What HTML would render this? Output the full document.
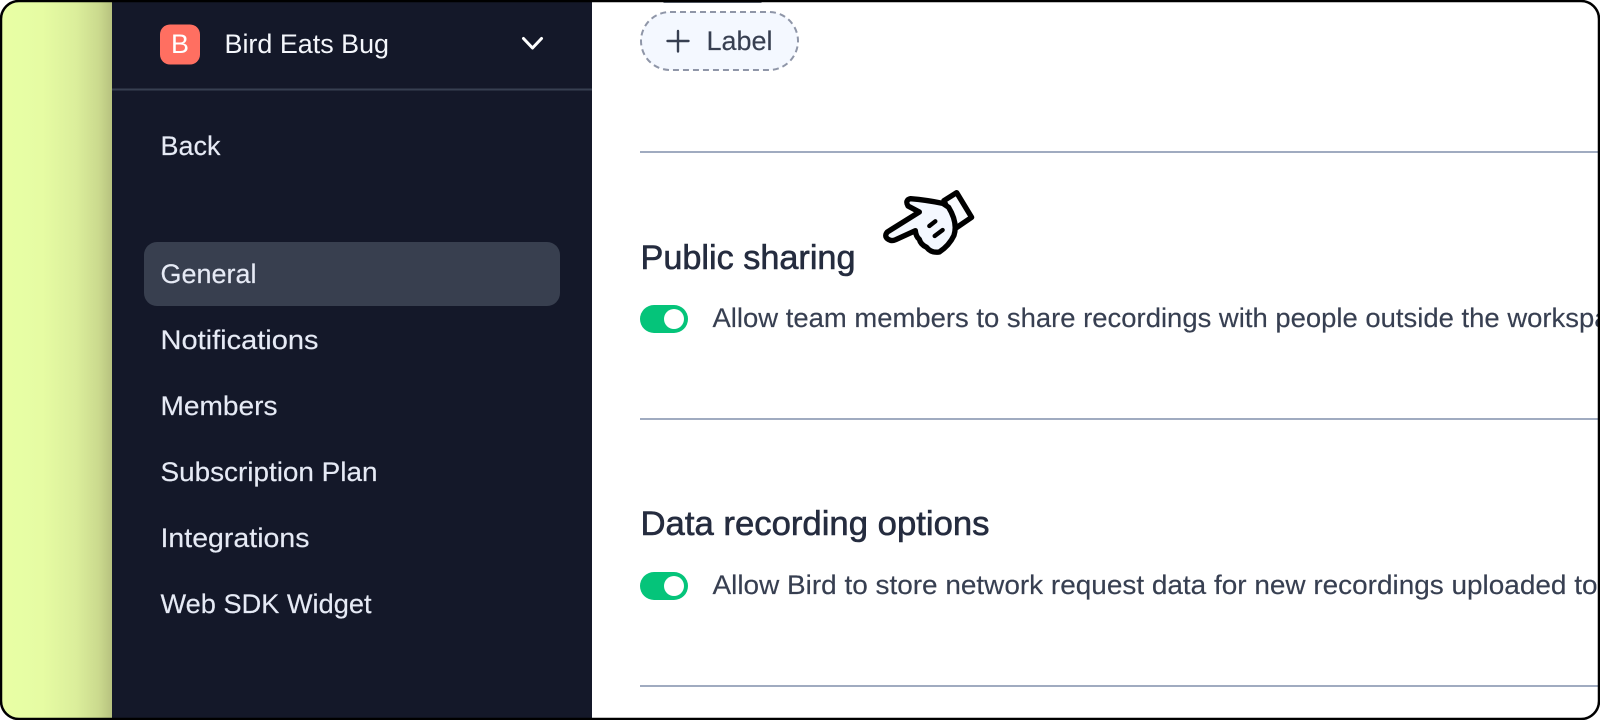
<!DOCTYPE html>
<html lang="en">
<head>
<meta charset="utf-8">
<title>Bird Eats Bug settings</title>
<style>
html,body{margin:0;padding:0;width:1600px;height:720px;overflow:hidden;background:#fff}
svg{display:block;position:absolute;left:0;top:0}
text{font-family:"Liberation Sans",Arial,sans-serif;font-size:26.5px}
.nav{fill:#E6EAF5;stroke:#E6EAF5;stroke-width:.15px}
.body{fill:#373F51;stroke:#373F51;stroke-width:.15px}
.h{font-size:34px;fill:#252C3F;stroke:#252C3F;stroke-width:.6px}
</style>
</head>
<body>
<svg width="1600" height="720" viewBox="0 0 1600 720" xmlns="http://www.w3.org/2000/svg">
  <defs>
    <linearGradient id="g" x1="0" x2="1" y1="0" y2="0">
      <stop offset="0" stop-color="#E8FFA5"/>
      <stop offset=".38" stop-color="#E6FCA3"/>
      <stop offset=".68" stop-color="#DBEE9B"/>
      <stop offset=".88" stop-color="#CBDA8E"/>
      <stop offset="1" stop-color="#B7C27F"/>
    </linearGradient>
    <clipPath id="frame"><rect x="1" y="1" width="1598" height="718" rx="18" ry="18"/></clipPath>
  </defs>
  <g clip-path="url(#frame)">
    <rect x="0" y="0" width="1600" height="720" fill="#fff"/>
    <rect x="0" y="0" width="112" height="720" fill="url(#g)"/>
    <rect x="112" y="0" width="480" height="720" fill="#141829"/>
    <rect x="112" y="88.5" width="480" height="2" fill="#373F51"/>

    <rect x="160" y="24.5" width="40" height="40" rx="10" fill="#FF6F61"/>
    <text x="171" y="53" fill="#fff" textLength="18" lengthAdjust="spacingAndGlyphs">B</text>
    <text x="224.5" y="53" fill="#F4F6FB" textLength="164.5" lengthAdjust="spacingAndGlyphs">Bird Eats Bug</text>
    <path d="M523.5 38.5 L532.5 48 L541.5 38.5" fill="none" stroke="#fff" stroke-width="3" stroke-linecap="round" stroke-linejoin="round"/>

    <text class="nav" x="160.5" y="155" textLength="60" lengthAdjust="spacingAndGlyphs">Back</text>
    <rect x="144" y="242" width="416" height="64" rx="13" fill="#383F4F"/>
    <text class="nav" x="160.5" y="283" textLength="96" lengthAdjust="spacingAndGlyphs">General</text>
    <text class="nav" x="160.5" y="349" textLength="158" lengthAdjust="spacingAndGlyphs">Notifications</text>
    <text class="nav" x="160.5" y="415" textLength="117" lengthAdjust="spacingAndGlyphs">Members</text>
    <text class="nav" x="160.5" y="481" textLength="217" lengthAdjust="spacingAndGlyphs">Subscription Plan</text>
    <text class="nav" x="160.5" y="547" textLength="149" lengthAdjust="spacingAndGlyphs">Integrations</text>
    <text class="nav" x="160.5" y="613" textLength="211" lengthAdjust="spacingAndGlyphs">Web SDK Widget</text>

    <rect x="663" y="0" width="99" height="3" rx="1.5" fill="#6B7280"/>
    <rect x="641" y="12" width="157" height="58" rx="29" fill="#F4F8FF" stroke="#8F96A8" stroke-width="2" stroke-dasharray="6 4"/>
    <path d="M678 31 V51.5 M667.5 41 H688.5" stroke="#373F51" stroke-width="2.4" stroke-linecap="round" fill="none"/>
    <text class="body" x="706.5" y="50" textLength="66" lengthAdjust="spacingAndGlyphs">Label</text>

    <rect x="640" y="151" width="960" height="2" fill="#A0ABC0"/>
    <rect x="640" y="418" width="960" height="2" fill="#A0ABC0"/>
    <rect x="640" y="685" width="960" height="2" fill="#A0ABC0"/>

    <text class="h" x="640.5" y="269" textLength="215" lengthAdjust="spacingAndGlyphs">Public sharing</text>
    <rect x="640" y="305" width="48" height="28" rx="14" fill="#05C47A"/>
    <circle cx="674" cy="319" r="10" fill="#fff"/>
    <text class="body" x="712.5" y="327" textLength="926" lengthAdjust="spacingAndGlyphs">Allow team members to share recordings with people outside the workspace</text>

    <text class="h" x="640.5" y="535" textLength="349" lengthAdjust="spacingAndGlyphs">Data recording options</text>
    <rect x="640" y="572" width="48" height="28" rx="14" fill="#05C47A"/>
    <circle cx="674" cy="586" r="10" fill="#fff"/>
    <text class="body" x="712.5" y="594" textLength="885" lengthAdjust="spacingAndGlyphs">Allow Bird to store network request data for new recordings uploaded to</text>

    <g transform="translate(860 170) scale(.3333)" stroke="#000" stroke-width="16" stroke-linejoin="round" stroke-linecap="round">
      <path d="M252 92 L290 68 L335 142 L288 174 Z" fill="#FAFCFF"/>
      <path d="M82 186 Q72 198 83 207 Q93 215 107 209 L166 182 Q168 200 178 208 Q182 224 200 232 Q214 250 238 246 Q268 226 282 196 Q294 158 266 112 L248 100 Q200 90 152 86 Q134 90 144 108 L178 126 Z" fill="#F4F8FF"/>
      <path d="M208 168 L226 154 M224 198 L248 180" fill="none" stroke-width="13"/>
    </g>
  </g>
  <rect x="1" y="1" width="1598" height="718" rx="18" ry="18" fill="none" stroke="#000" stroke-width="2.5"/>
</svg>
</body>
</html>
